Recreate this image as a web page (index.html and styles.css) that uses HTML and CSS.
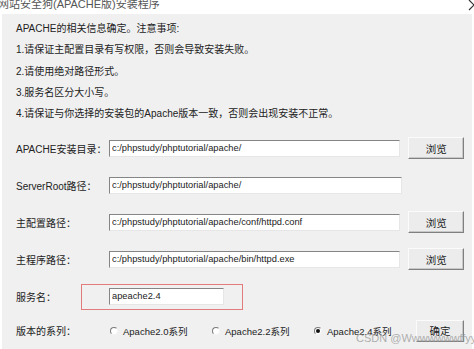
FILE: index.html
```html
<!DOCTYPE html>
<html>
<head>
  <title>网站安全狗(APACHE版)安装程序</title>
  <link rel="stylesheet" href="styles.css">
</head>
<body>
  <div class="titlebar">
    <div class="title">网站安全狗(APACHE版)安装程序</div>
    <svg class="close" width="12" height="12" viewBox="0 0 12 12">
      <path d="M1 1 L11 11 M1 11 L11 1" stroke="#333" stroke-width="1.2" fill="none"/>
    </svg>
  </div>

  <div class="panel">
    <div class="notes">
      <p>APACHE的相关信息确定。注意事项:</p>
      <p>1.请保证主配置目录有写权限，否则会导致安装失败。</p>
      <p>2.请使用绝对路径形式。</p>
      <p>3.服务名区分大小写。</p>
      <p>4.请保证与你选择的安装包的Apache版本一致，否则会出现安装不正常。</p>
    </div>

    <div class="form">
      <div class="row">
        <span class="label">APACHE安装目录：</span>
        <input class="field" type="text" value="c:/phpstudy/phptutorial/apache/" readonly>
        <button class="btn">浏览</button>
      </div>
      <div class="row">
        <span class="label">ServerRoot路径：</span>
        <input class="field" type="text" value="c:/phpstudy/phptutorial/apache/" readonly>
      </div>
      <div class="row">
        <span class="label">主配置路径：</span>
        <input class="field" type="text" value="c:/phpstudy/phptutorial/apache/conf/httpd.conf" readonly>
        <button class="btn">浏览</button>
      </div>
      <div class="row">
        <span class="label">主程序路径：</span>
        <input class="field" type="text" value="c:/phpstudy/phptutorial/apache/bin/httpd.exe" readonly>
        <button class="btn">浏览</button>
      </div>
      <div class="row">
        <span class="label">服务名：</span>
        <span class="marked">
          <input class="field field-short" type="text" value="apeache2.4" readonly>
        </span>
      </div>
      <div class="row row-last">
        <span class="label">版本的系列：</span>
        <div class="options">
          <label class="option"><span class="radio"></span>Apache2.0系列</label>
          <label class="option"><span class="radio"></span>Apache2.2系列</label>
          <label class="option"><span class="radio checked"></span>Apache2.4系列</label>
        </div>
        <button class="btn">确定</button>
      </div>
    </div>
  </div>

  <div class="watermark">CSDN @Wwwwwwwffyyy</div>
</body>
</html>
```

FILE: styles.css
```css
html, body {
  margin: 0;
  padding: 0;
  height: 100%;
}

body {
  position: relative;
  overflow: hidden;
  background-color: #fff;
  color: #222;
  font-family: "Liberation Sans", "Noto Sans CJK SC", sans-serif;
}

.titlebar {
  position: relative;
  height: 14px;
  overflow: hidden;
}

.title {
  margin: -2px 0 0 -2px;
  font-size: 11px;
  line-height: 13px;
  color: #555;
  white-space: nowrap;
}

.close {
  position: absolute;
  top: -1px;
  right: -6px;
}

.panel {
  height: 335px;
  margin: 0 2px;
  padding: 4px 8px 0 14px;
  background-color: #f0f0f0;
}

.notes p {
  margin: 0;
  height: 21.3px;
  line-height: 21.3px;
  font-size: 10px;
  white-space: nowrap;
}

.form {
  margin-top: 5.5px;
}

.row {
  display: flex;
  align-items: center;
  height: 37px;
}

.row-last {
  height: 32px;
}

.label {
  flex-shrink: 0;
  width: 93px;
  font-size: 10px;
  white-space: nowrap;
}

.field {
  box-sizing: border-box;
  width: 293px;
  height: 17px;
  margin: 0;
  padding: 0 2px;
  border: 1px solid;
  border-color: #858585 #e6e6e6 #e6e6e6 #858585;
  background-color: #fff;
  color: #222;
  font-family: "Liberation Sans", sans-serif;
  font-size: 9.3px;
  outline: none;
}

.field-short {
  width: 115px;
}

.marked {
  position: relative;
  display: flex;
}

.marked::before {
  content: "";
  position: absolute;
  left: -28px;
  right: -19px;
  top: -4px;
  bottom: -5px;
  border: 1.5px solid #e27c7c;
}

.btn {
  box-sizing: border-box;
  width: 56px;
  height: 22px;
  margin-left: 8px;
  padding: 0;
  border: 1px solid;
  border-color: #fbfbfb #808080 #808080 #fbfbfb;
  box-shadow: inset -1px -1px 0 #c8c8c8;
  background-color: #ececec;
  color: #222;
  font-family: "Liberation Sans", "Noto Sans CJK SC", sans-serif;
  font-size: 10.5px;
}

.row-last .btn {
  margin-left: auto;
}

.options {
  display: flex;
  padding-left: 1px;
}

.option {
  display: flex;
  align-items: center;
  width: 102px;
  font-size: 9.5px;
  white-space: nowrap;
}

.radio {
  position: relative;
  box-sizing: border-box;
  width: 8px;
  height: 8px;
  margin-right: 5px;
  border: 1px solid;
  border-color: #7a7a7a #f4f4f4 #f4f4f4 #7a7a7a;
  border-radius: 50%;
  background-color: #fff;
}

.radio.checked::after {
  content: "";
  position: absolute;
  left: 1px;
  top: 1px;
  width: 4px;
  height: 4px;
  border-radius: 50%;
  background-color: #111;
}

.watermark {
  position: absolute;
  left: 356px;
  top: 332px;
  font-size: 11px;
  color: rgba(150, 150, 150, 0.75);
  white-space: nowrap;
}
```
